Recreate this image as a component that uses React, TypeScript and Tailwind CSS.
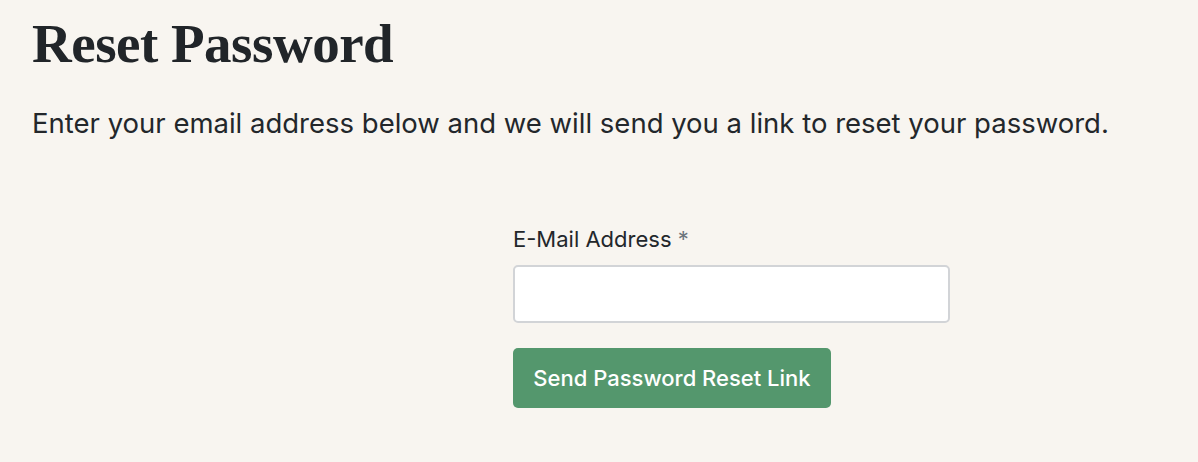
export default function App() {
  return (
    <div className="min-h-[462px] w-full bg-[#f8f5f0] text-[#212529]" style={{ fontFamily: 'Inter, "Noto Sans", sans-serif' }}>
      <div className="px-[32px] pt-[12px]">
        <h1 className="text-[55px] leading-[64px] font-bold tracking-[-0.5px]" style={{ fontFamily: '"Liberation Serif", "DejaVu Serif", serif' }}>
          Reset Password
        </h1>
        <p className="mt-[31px] text-[27.5px] leading-[32px] text-[#23272b]">
          Enter your email address below and we will send you a link to reset your password.
        </p>

        <form className="mt-[86px] flex" onSubmit={(e) => e.preventDefault()}>
          <div className="w-[481px] shrink-0" />
          <div className="flex w-[437px] flex-col">
            <label htmlFor="email" className="text-[22px] leading-[28px] text-[#23272b]">
              E-Mail Address <span className="text-[#6c757d]">*</span>
            </label>
            <input
              id="email"
              type="email"
              className="mt-[12px] h-[58px] w-full rounded-[5px] border-2 border-[#d2d4d7] bg-white px-3 text-[20px] outline-none"
            />
            <div className="mt-[25px]">
              <button
                type="submit"
                className="h-[60px] w-[318px] rounded-[5px] bg-[#54976d] text-[22px] font-medium text-white"
              >
                Send Password Reset Link
              </button>
            </div>
          </div>
        </form>
      </div>
    </div>
  )
}
